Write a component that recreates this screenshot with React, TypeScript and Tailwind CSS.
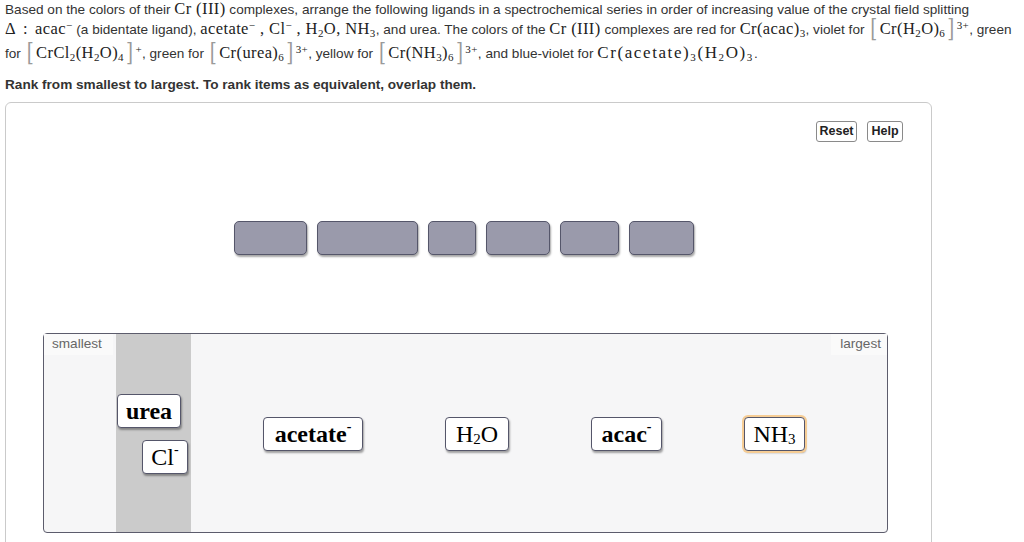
import type { ReactNode } from "react";

// math-ish inline pieces in a serif face
function M({ children, wide }: { children: ReactNode; wide?: boolean }) {
  return (
    <span
      className={
        wide
          ? "font-['Liberation_Serif','Times_New_Roman',serif] text-[17px] tracking-[1.6px] text-[#222]"
          : "font-['Liberation_Serif','Times_New_Roman',serif] text-[16.5px] tracking-[0.4px] text-[#222]"
      }
    >
      {children}
    </span>
  );
}

function Sub({ children }: { children: ReactNode }) {
  return <sub className="text-[11px]">{children}</sub>;
}

function Sup({ children }: { children: ReactNode }) {
  return <sup className="text-[11px]">{children}</sup>;
}

function Br({ children }: { children: ReactNode }) {
  return (
    <span className="mx-[2px] inline-block scale-y-[1.35] font-['DejaVu_Serif',serif] text-[18px] font-extralight leading-none text-[#9a9a9a]">
      {children}
    </span>
  );
}

const tile =
  "absolute flex h-[34px] items-center justify-center rounded-[4px] border border-[#55566a] bg-white text-[24px] leading-none text-black shadow-[1px_2px_2px_rgba(0,0,0,0.35)] font-['Liberation_Serif','Times_New_Roman',serif]";

const slot = "h-[34px] rounded-[5px] border border-[#55566a] bg-[#9a9aab] shadow-[1px_2px_2px_rgba(0,0,0,0.35)]";

export default function App() {
  return (
    <div className="h-[542px] w-[1024px] overflow-hidden bg-white font-['Liberation_Sans',Arial,sans-serif] text-[13.6px] text-[#333]">
      {/* question text */}
      <div className="pl-[5px]">
        <div className="h-[18px] whitespace-nowrap leading-[18px]">
          Based on the colors of their <M>Cr (III)</M> complexes, arrange the following ligands in a spectrochemical series in order of
          increasing value of the crystal field splitting
        </div>
        <div className="h-[24px] whitespace-nowrap leading-[22px]">
          <M>
            Δ<span className="mx-[7px]">:</span>acac<Sup>−</Sup>
          </M>{" "}
          (a bidentate ligand),{" "}
          <M>
            acetate<Sup>−</Sup> , Cl<Sup>−</Sup> , H<Sub>2</Sub>O, NH<Sub>3</Sub>
          </M>
          , and urea. The colors of the <M>Cr (III)</M> complexes are red for{" "}
          <M>
            Cr(acac)<Sub>3</Sub>
          </M>
          , violet for{" "}
          <M>
            <Br>[</Br>Cr(H<Sub>2</Sub>O)<Sub>6</Sub>
            <Br>]</Br>
            <Sup>3+</Sup>
          </M>
          , green
        </div>
        <div className="h-[26px] whitespace-nowrap leading-[22px]">
          for{" "}
          <M>
            <Br>[</Br>CrCl<Sub>2</Sub>(H<Sub>2</Sub>O)<Sub>4</Sub>
            <Br>]</Br>
            <Sup>+</Sup>
          </M>
          , green for{" "}
          <M>
            <Br>[</Br>Cr(urea)<Sub>6</Sub>
            <Br>]</Br>
            <Sup>3+</Sup>
          </M>
          , yellow for{" "}
          <M>
            <Br>[</Br>Cr(NH<Sub>3</Sub>)<Sub>6</Sub>
            <Br>]</Br>
            <Sup>3+</Sup>
          </M>
          , and blue-violet for{" "}
          <M wide>
            Cr(acetate)<Sub>3</Sub>(H<Sub>2</Sub>O)<Sub>3</Sub>
          </M>
          .
        </div>
        <div className="mt-[10px] h-[24px] font-bold leading-[14px]">
          Rank from smallest to largest. To rank items as equivalent, overlap them.
        </div>
      </div>

      {/* ranking panel */}
      <div className="ml-[5px] h-[460px] w-[927px] rounded-[6px] border border-[#cacaca]">
        <div className="flex justify-end gap-[10px] pr-[28px] pt-[18px]">
          <button className="h-[21px] w-[41px] rounded-[3px] border border-[#8a8a8a] bg-white text-[12.5px] font-bold text-[#222]">
            Reset
          </button>
          <button className="h-[21px] w-[36px] rounded-[3px] border border-[#8a8a8a] bg-white text-[12.5px] font-bold text-[#222]">
            Help
          </button>
        </div>

        {/* empty slots for the items */}
        <div className="ml-[228px] mt-[79px] flex gap-[10px]">
          <div className={`${slot} w-[73px]`} />
          <div className={`${slot} w-[101px]`} />
          <div className={`${slot} w-[48px]`} />
          <div className={`${slot} w-[64px]`} />
          <div className={`${slot} w-[59px]`} />
          <div className={`${slot} w-[65px]`} />
        </div>

        {/* drop area */}
        <div className="relative ml-[37px] mt-[78px] flex h-[200px] w-[845px] rounded-[4px] border border-[#5c5c6c] bg-[#f6f6f7]">
          <div className="w-[72px]">
            <div className="h-[21px] w-[69px] bg-[#fafafa] pl-[8px] leading-[20px] text-[#666]">smallest</div>
          </div>
          <div className="w-[75px] bg-[#cbcbcb]" />
          <div className="flex flex-1 justify-end">
            <div className="h-[21px] bg-[#fafafa] pl-[9px] pr-[6px] leading-[20px] text-[#666]">largest</div>
          </div>

          <div className={`${tile} left-[73px] top-[60px] w-[64px] font-bold`}>urea</div>
          <div className={`${tile} left-[98px] top-[106px] w-[46px]`}>
            Cl<sup className="text-[14px]">-</sup>
          </div>
          <div className={`${tile} left-[219px] top-[83px] w-[100px] font-bold`}>
            acetate<sup className="text-[14px]">-</sup>
          </div>
          <div className={`${tile} left-[401px] top-[83px] w-[64px]`}>
            H<span className="relative top-[5px] text-[15px]">2</span>O
          </div>
          <div className={`${tile} left-[547px] top-[83px] w-[71px] font-bold`}>
            acac<sup className="text-[14px]">-</sup>
          </div>
          <div className={`${tile} left-[700px] top-[83px] w-[61px] ring-2 ring-[#f6cd95]`}>
            NH<span className="relative top-[5px] text-[15px]">3</span>
          </div>
        </div>
      </div>
    </div>
  );
}
